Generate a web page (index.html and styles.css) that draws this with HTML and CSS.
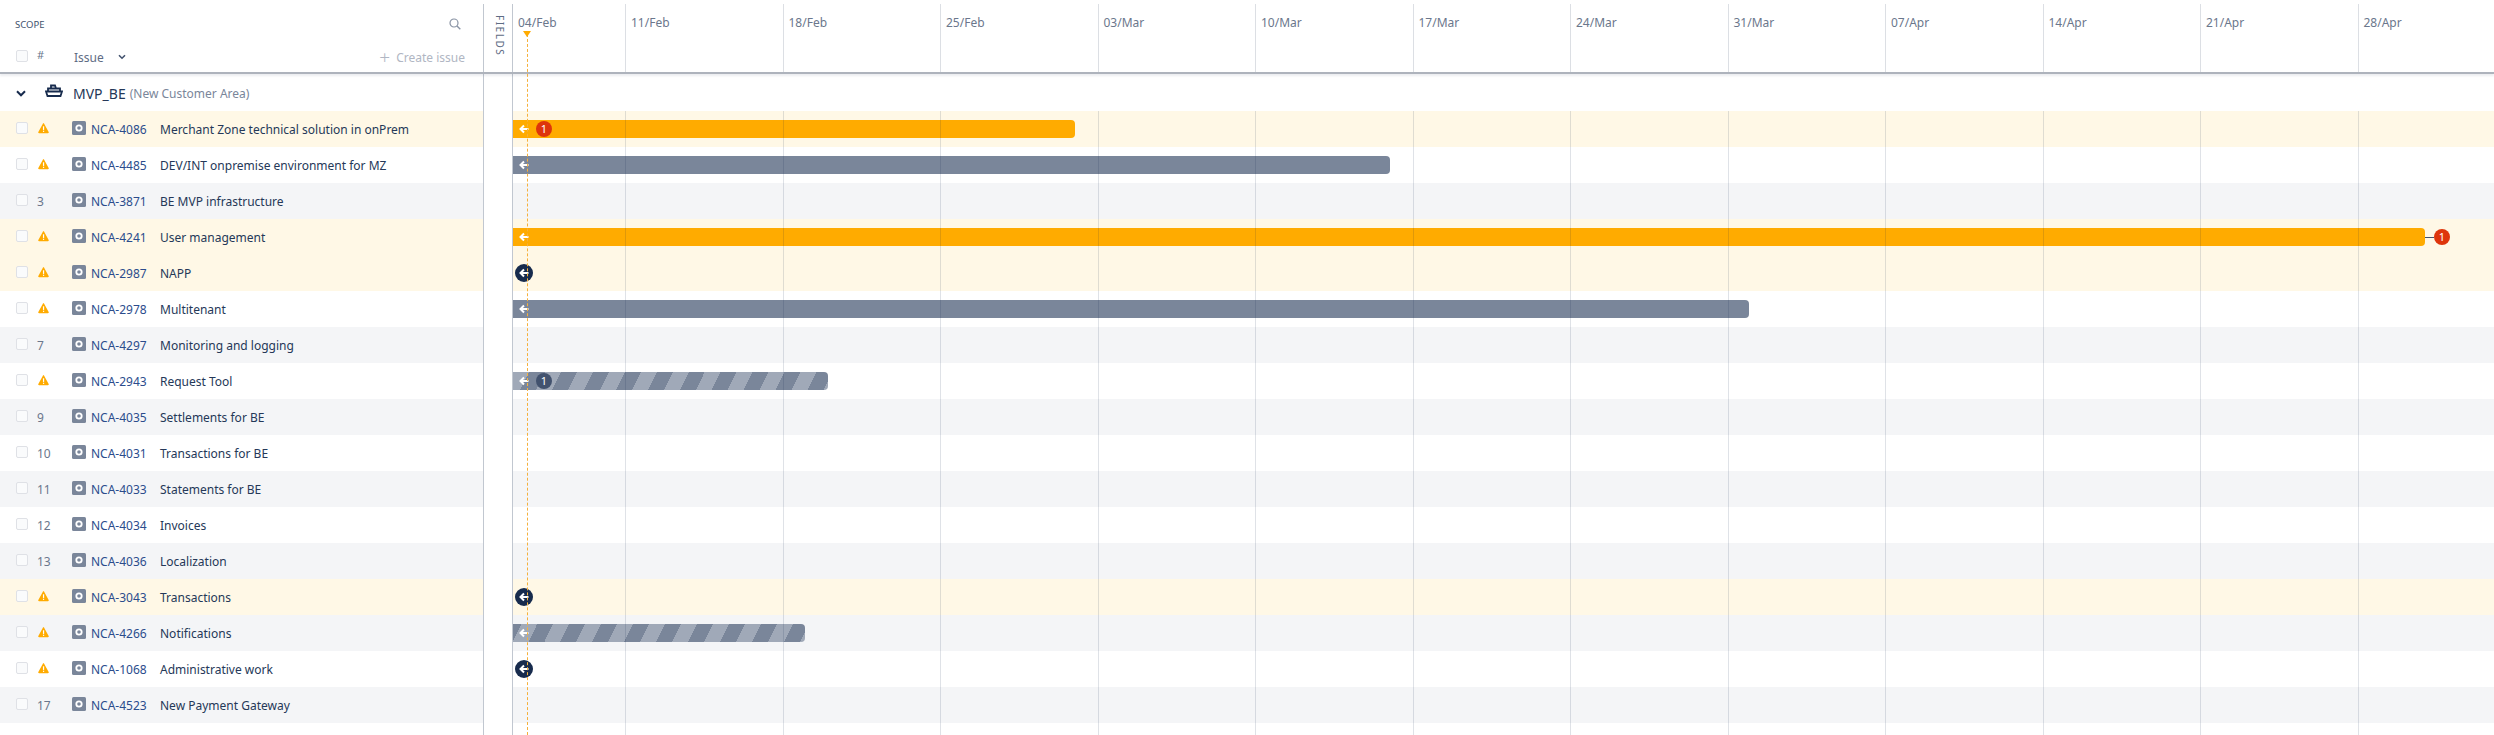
FILE: index.html
```html
<!DOCTYPE html>
<html lang="en">
<head>
<meta charset="utf-8">
<title>Roadmap</title>
<link rel="stylesheet" href="styles.css">
</head>
<body>
<svg class="defs" width="0" height="0" aria-hidden="true">
  <symbol id="warn" viewBox="0 0 10 10"><path d="M5 .3c.3 0 .5.1.7.5l4 7.400c.3.600 0 1.100-.7 1.100H1c-.7 0-1-.5-.7-1.100l4-7.400C4.500.4 4.700.3 5 .3z" fill="#ffab00"/><rect x="4.500" y="3" width="1.100" height="3.300" fill="#fff"/><rect x="4.500" y="7" width="1.100" height="1.100" fill="#fff"/></symbol>
  <symbol id="epic" viewBox="0 0 14 14"><rect width="14" height="14" rx="1.500" fill="#7a869a"/><circle cx="7" cy="7" r="2.700" fill="none" stroke="#fff" stroke-width="1.800"/></symbol>
  <symbol id="back" viewBox="0 0 10 10"><path d="M5 1.500 1.500 5 5 8.500M1.800 5H9.500" fill="none" stroke="#fff" stroke-width="2"/></symbol>
</svg>
<main class="plan">
  <header class="head">
    <div class="scope-head">
      <div class="scope-title">
        <span class="scope-label">SCOPE</span>
        <svg class="search" viewBox="0 0 12 12" width="12" height="12"><circle cx="5" cy="5" r="4" fill="none" stroke="#8993a4" stroke-width="1.200"/><path d="M8 8l3.300 3.300" stroke="#8993a4" stroke-width="1.400"/></svg>
      </div>
      <div class="scope-cols">
        <span class="check"></span>
        <span class="hash">#</span>
        <span class="issue-label">Issue</span>
        <svg class="issue-chev" viewBox="0 0 8 6" width="8" height="6"><path d="M1 1.200 4 4.200 7 1.200" fill="none" stroke="#42526e" stroke-width="1.600"/></svg>
        <span class="create"><span class="plus">+</span>Create issue</span>
      </div>
    </div>
    <div class="fields"><span class="fields-label">FIELDS</span></div>
    <div class="dates">
      <div class="date first">04/Feb</div>
      <div class="date">11/Feb</div>
      <div class="date">18/Feb</div>
      <div class="date">25/Feb</div>
      <div class="date">03/Mar</div>
      <div class="date">10/Mar</div>
      <div class="date">17/Mar</div>
      <div class="date">24/Mar</div>
      <div class="date">31/Mar</div>
      <div class="date">07/Apr</div>
      <div class="date">14/Apr</div>
      <div class="date">21/Apr</div>
      <div class="date">28/Apr</div>
    </div>
  </header>
  <div class="body">
    <section class="scope">
      <div class="group">
        <svg class="group-chev" viewBox="0 0 10 7" width="10" height="7"><path d="M1 1.300 5 5.300 9 1.300" fill="none" stroke="#172b4d" stroke-width="2"/></svg>
        <svg class="ship" viewBox="0 0 18 13" width="18" height="13"><path d="M1 7.500h16l-1.500 4.500H2.500zM3 7.500V4.500h12v3M6 4.500V1.500h4l1 3" fill="none" stroke="#172b4d" stroke-width="1.800"/></svg>
        <span class="group-name">MVP_BE</span>
        <span class="group-sub">(New Customer Area)</span>
      </div>
      <div class="row warned"><span class="check"></span><svg class="warn"><use href="#warn"/></svg><svg class="type"><use href="#epic"/></svg><a class="key">NCA-4086</a><span class="name">Merchant Zone technical solution in onPrem</span></div>
      <div class="row"><span class="check"></span><svg class="warn"><use href="#warn"/></svg><svg class="type"><use href="#epic"/></svg><a class="key">NCA-4485</a><span class="name">DEV/INT onpremise environment for MZ</span></div>
      <div class="row alt"><span class="check"></span><span class="num">3</span><svg class="type"><use href="#epic"/></svg><a class="key">NCA-3871</a><span class="name">BE MVP infrastructure</span></div>
      <div class="row warned"><span class="check"></span><svg class="warn"><use href="#warn"/></svg><svg class="type"><use href="#epic"/></svg><a class="key">NCA-4241</a><span class="name">User management</span></div>
      <div class="row warned"><span class="check"></span><svg class="warn"><use href="#warn"/></svg><svg class="type"><use href="#epic"/></svg><a class="key">NCA-2987</a><span class="name">NAPP</span></div>
      <div class="row"><span class="check"></span><svg class="warn"><use href="#warn"/></svg><svg class="type"><use href="#epic"/></svg><a class="key">NCA-2978</a><span class="name">Multitenant</span></div>
      <div class="row alt"><span class="check"></span><span class="num">7</span><svg class="type"><use href="#epic"/></svg><a class="key">NCA-4297</a><span class="name">Monitoring and logging</span></div>
      <div class="row"><span class="check"></span><svg class="warn"><use href="#warn"/></svg><svg class="type"><use href="#epic"/></svg><a class="key">NCA-2943</a><span class="name">Request Tool</span></div>
      <div class="row alt"><span class="check"></span><span class="num">9</span><svg class="type"><use href="#epic"/></svg><a class="key">NCA-4035</a><span class="name">Settlements for BE</span></div>
      <div class="row"><span class="check"></span><span class="num">10</span><svg class="type"><use href="#epic"/></svg><a class="key">NCA-4031</a><span class="name">Transactions for BE</span></div>
      <div class="row alt"><span class="check"></span><span class="num">11</span><svg class="type"><use href="#epic"/></svg><a class="key">NCA-4033</a><span class="name">Statements for BE</span></div>
      <div class="row"><span class="check"></span><span class="num">12</span><svg class="type"><use href="#epic"/></svg><a class="key">NCA-4034</a><span class="name">Invoices</span></div>
      <div class="row alt"><span class="check"></span><span class="num">13</span><svg class="type"><use href="#epic"/></svg><a class="key">NCA-4036</a><span class="name">Localization</span></div>
      <div class="row warned"><span class="check"></span><svg class="warn"><use href="#warn"/></svg><svg class="type"><use href="#epic"/></svg><a class="key">NCA-3043</a><span class="name">Transactions</span></div>
      <div class="row alt"><span class="check"></span><svg class="warn"><use href="#warn"/></svg><svg class="type"><use href="#epic"/></svg><a class="key">NCA-4266</a><span class="name">Notifications</span></div>
      <div class="row"><span class="check"></span><svg class="warn"><use href="#warn"/></svg><svg class="type"><use href="#epic"/></svg><a class="key">NCA-1068</a><span class="name">Administrative work</span></div>
      <div class="row alt"><span class="check"></span><span class="num">17</span><svg class="type"><use href="#epic"/></svg><a class="key">NCA-4523</a><span class="name">New Payment Gateway</span></div>
    </section>
    <div class="gutter"></div>
    <section class="chart">
      <div class="group-spacer"></div>
      <div class="track warned"><div class="bar orange" style="width:562px"><svg class="arrow"><use href="#back"/></svg><span class="badge red">1</span></div></div>
      <div class="track"><div class="bar slate" style="width:877px"><svg class="arrow"><use href="#back"/></svg></div></div>
      <div class="track alt"></div>
      <div class="track warned"><div class="bar orange" style="width:1912px"><svg class="arrow"><use href="#back"/></svg></div><span class="link"></span><span class="badge red">1</span></div>
      <div class="track warned"><span class="jump"><svg class="jump-arrow"><use href="#back"/></svg></span></div>
      <div class="track"><div class="bar slate" style="width:1236px"><svg class="arrow"><use href="#back"/></svg></div></div>
      <div class="track alt"></div>
      <div class="track"><div class="bar striped" style="width:315px"><svg class="arrow"><use href="#back"/></svg><span class="badge navy">1</span></div></div>
      <div class="track alt"></div>
      <div class="track"></div>
      <div class="track alt"></div>
      <div class="track"></div>
      <div class="track alt"></div>
      <div class="track warned"><span class="jump"><svg class="jump-arrow"><use href="#back"/></svg></span></div>
      <div class="track alt"><div class="bar striped shifted" style="width:292px"><svg class="arrow"><use href="#back"/></svg></div></div>
      <div class="track"><span class="jump"><svg class="jump-arrow"><use href="#back"/></svg></span></div>
      <div class="track alt"></div>
      <div class="gridlines">
        <div class="gridcell first"></div>
        <div class="gridcell"></div><div class="gridcell"></div><div class="gridcell"></div>
        <div class="gridcell"></div><div class="gridcell"></div><div class="gridcell"></div>
        <div class="gridcell"></div><div class="gridcell"></div><div class="gridcell"></div>
        <div class="gridcell"></div><div class="gridcell"></div><div class="gridcell"></div>
      </div>
    </section>
    <div class="today"></div>
  </div>
</main>
</body>
</html>
```
FILE: styles.css
```css
* { box-sizing: border-box; }
html, body { margin: 0; height: 100%; background: #fff; overflow: hidden; }
body { font-family: "Noto Sans", "Open Sans", sans-serif; color: #253858; }
.defs { position: absolute; }
.plan { display: flex; flex-direction: column; height: 735px; padding-top: 4px; position: relative; }

/* header */
.head { display: flex; height: 70px; flex: none; border-bottom: 2px solid #aeb3bc; box-shadow: 0 2px 2px rgba(9,30,66,.08); position: relative; z-index: 2; background: #fff; }
.scope-head { width: 484px; flex: none; border-right: 1px solid #c1c7d0; display: flex; flex-direction: column; padding: 0 18px 0 16px; }
.scope-title { display: flex; justify-content: space-between; align-items: center; height: 32px; padding-top: 8px; margin-left: -1px; }
.scope-label { font-size: 9.500px; color: #42526e; }
.search { margin-right: 4px; }
.scope-cols { display: flex; align-items: center; height: 26px; margin-top: 8px; }
.scope-cols .check { margin-top: -3px; }
.hash { width: 12px; margin: -6px 0 0 9px; font-size: 11px; color: #6b778c; }
.issue-label { margin-left: 25px; font-size: 12px; color: #5e6c84; }
.issue-chev { margin-left: 14px; }
.create { margin-left: auto; font-size: 12px; color: #b0b6c3; display: flex; align-items: center; }
.plus { font-size: 19px; line-height: 1; margin-right: 6px; font-weight: 300; }
.fields { width: 29px; flex: none; border-right: 1px solid #c1c7d0; display: flex; justify-content: center; align-items: flex-start; padding: 11px 0 0 3px; }
.fields-label { writing-mode: vertical-rl; font-size: 10px; line-height: 12px; letter-spacing: 1.500px; color: #5e6c84; white-space: nowrap; }
.dates { display: flex; flex: 1; }
.date { width: 157.500px; flex: none; border-left: 1px solid #dcdfe4; padding: 10px 0 0 5px; font-size: 12px; line-height: 18px; color: #6b778c; }
.date.first { width: 112px; border-left: 0; }

/* body */
.body { display: flex; flex: 1; position: relative; }
.scope { width: 484px; flex: none; border-right: 1px solid #c1c7d0; }
.group { display: flex; align-items: center; height: 35px; padding-left: 16px; margin-top: 2px; }
.group-chev { margin-top: -1px; }
.ship { margin-left: 19px; margin-top: -6px; }
.group-name { margin-left: 10px; font-size: 14px; color: #253858; }
.group-sub { margin-left: 4px; font-size: 12px; color: #7a869a; }
.row, .track { height: 36px; }
.row { display: flex; align-items: center; font-size: 12px; padding-left: 16px; }
.alt { background: #f4f5f7; }
.warned { background: #fff8e6; }
.check { display: block; width: 12px; height: 12px; flex: none; background: #fafbfc; border: 1px solid #dfe1e6; border-radius: 2px; margin-top: -2px; }
.warn { width: 11px; height: 11px; margin: -2px 23px 0 10px; flex: none; }
.num { width: 22px; margin-left: 9px; flex: none; color: #6b778c; font-size: 12px; }
.type { width: 14px; height: 14px; margin-top: -2px; flex: none; }
.num + .type { margin-left: 13px; }
.key { margin-left: 5px; width: 69px; flex: none; color: #2b4c8c; }
.name { color: #253858; }

.gutter { width: 29px; flex: none; border-right: 1px solid #c1c7d0; }
.chart { flex: 1; position: relative; }
.group-spacer { height: 37px; }
.track { display: flex; align-items: center; position: relative; }

/* bars */
.bar { height: 18px; display: flex; align-items: center; border-radius: 0 4px 4px 0; position: relative; padding-left: 6px; }
.orange { background: #ffab00; }
.slate { background: #7a869a; }
.striped { background: repeating-linear-gradient(116.500deg, #a0a9b8 0 14.300px, #7a869a 14.300px 28.600px); }
.striped.shifted { background: repeating-linear-gradient(116.500deg, #7a869a 0 7.400px, #a0a9b8 7.400px 21.700px, #7a869a 21.700px 28.600px); }
.arrow { width: 10px; height: 10px; flex: none; }
.badge { width: 16px; height: 16px; flex: none; border-radius: 50%; color: #fff; font-size: 11px; line-height: 16px; text-align: center; }
.bar .badge { margin-left: 7px; }
.red { background: #de350b; }
.navy { background: #42526e; }
.link { width: 9px; height: 1px; background: #42526e; }
.jump { width: 18px; height: 18px; margin-left: 2px; border-radius: 50%; background: #172b4d; display: flex; align-items: center; justify-content: center; }
.jump-arrow { width: 10px; height: 10px; }

/* overlays */
.gridlines { position: absolute; top: 37px; left: 0; right: 0; bottom: 0; display: flex; pointer-events: none; }
.gridcell { width: 157.500px; flex: none; border-left: 1px solid rgba(9,30,66,.13); }
.gridcell.first { width: 112px; border-left: 0; }
.today { position: absolute; left: 527px; top: -40px; bottom: 0; border-left: 1px dashed #f5b03c; z-index: 3; }
.today::before { content: ""; position: absolute; top: -3px; left: -5px; border: 4.500px solid transparent; border-top: 6px solid #ffab00; border-bottom: 0; }
```
